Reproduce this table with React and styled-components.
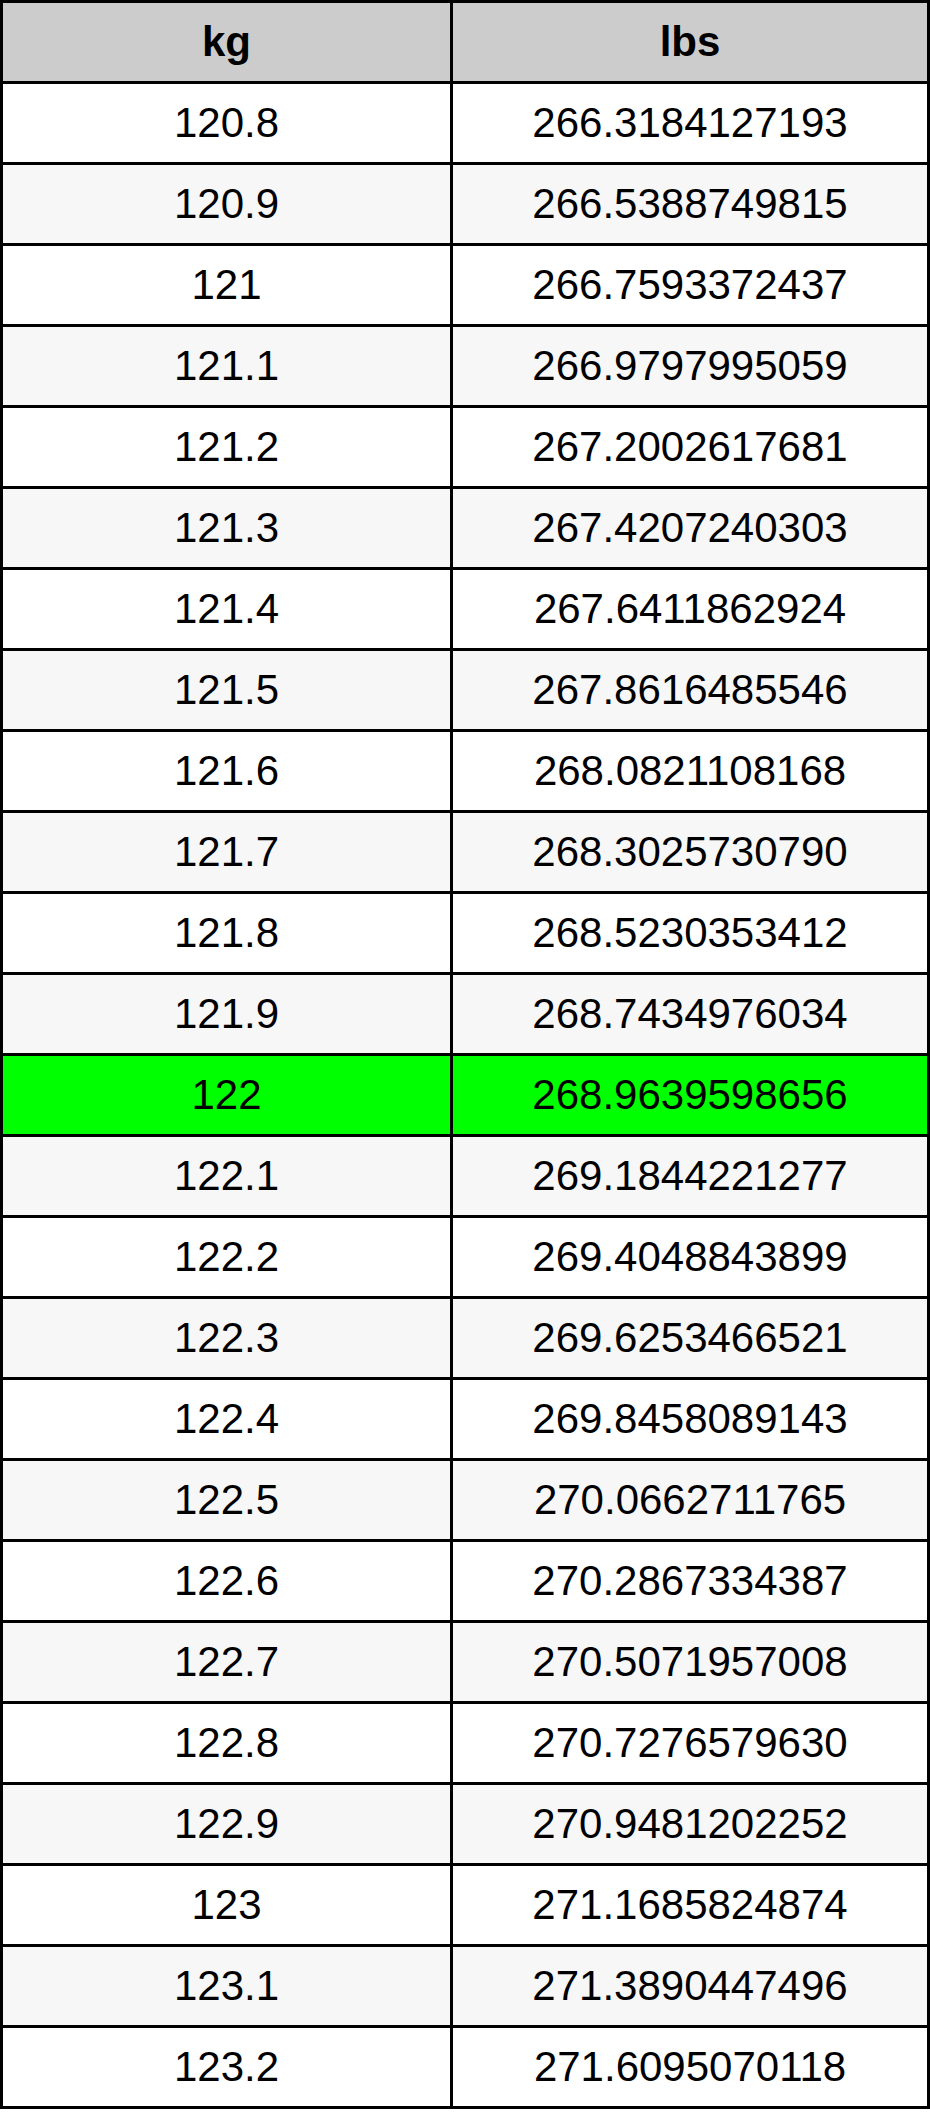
import React from "react";
import styled, { createGlobalStyle } from "styled-components";

const GlobalStyle = createGlobalStyle`
  html, body {
    margin: 0;
    padding: 0;
    background: #ffffff;
  }
  body {
    font-family: "Liberation Sans", Arial, sans-serif;
  }
`;

const Table = styled.table`
  width: 930px;
  table-layout: fixed;
  border-collapse: separate;
  border-spacing: 0;
  border-top: 3px solid #000;
  border-left: 3px solid #000;
  font-family: "Liberation Sans", Arial, sans-serif;
  font-size: 42px;
  color: #000;
`;

const HeadCell = styled.th`
  width: ${(p) => (p.$first ? "447px" : "auto")};
  height: 78px;
  padding: 0;
  background: #cccccc;
  border-right: 3px solid #000;
  border-bottom: 3px solid #000;
  font-weight: bold;
  text-align: center;
  vertical-align: middle;
`;

const Row = styled.tr`
  background: ${(p) =>
    p.$highlight ? "#00ff00" : p.$alt ? "#f7f7f7" : "#ffffff"};
`;

const Cell = styled.td`
  height: 78px;
  padding: 0;
  border-right: 3px solid #000;
  border-bottom: 3px solid #000;
  text-align: center;
  vertical-align: middle;
`;

const rows = [
  ["120.8", "266.3184127193"],
  ["120.9", "266.5388749815"],
  ["121", "266.7593372437"],
  ["121.1", "266.9797995059"],
  ["121.2", "267.2002617681"],
  ["121.3", "267.4207240303"],
  ["121.4", "267.6411862924"],
  ["121.5", "267.8616485546"],
  ["121.6", "268.0821108168"],
  ["121.7", "268.3025730790"],
  ["121.8", "268.5230353412"],
  ["121.9", "268.7434976034"],
  ["122", "268.9639598656"],
  ["122.1", "269.1844221277"],
  ["122.2", "269.4048843899"],
  ["122.3", "269.6253466521"],
  ["122.4", "269.8458089143"],
  ["122.5", "270.0662711765"],
  ["122.6", "270.2867334387"],
  ["122.7", "270.5071957008"],
  ["122.8", "270.7276579630"],
  ["122.9", "270.9481202252"],
  ["123", "271.1685824874"],
  ["123.1", "271.3890447496"],
  ["123.2", "271.6095070118"],
];

export default function App() {
  return (
    <>
      <GlobalStyle />
      <Table>
        <thead>
          <tr>
            <HeadCell $first>kg</HeadCell>
            <HeadCell>lbs</HeadCell>
          </tr>
        </thead>
        <tbody>
          {rows.map(([kg, lbs], i) => (
            <Row key={kg} $alt={i % 2 === 1} $highlight={kg === "122"}>
              <Cell>{kg}</Cell>
              <Cell>{lbs}</Cell>
            </Row>
          ))}
        </tbody>
      </Table>
    </>
  );
}
